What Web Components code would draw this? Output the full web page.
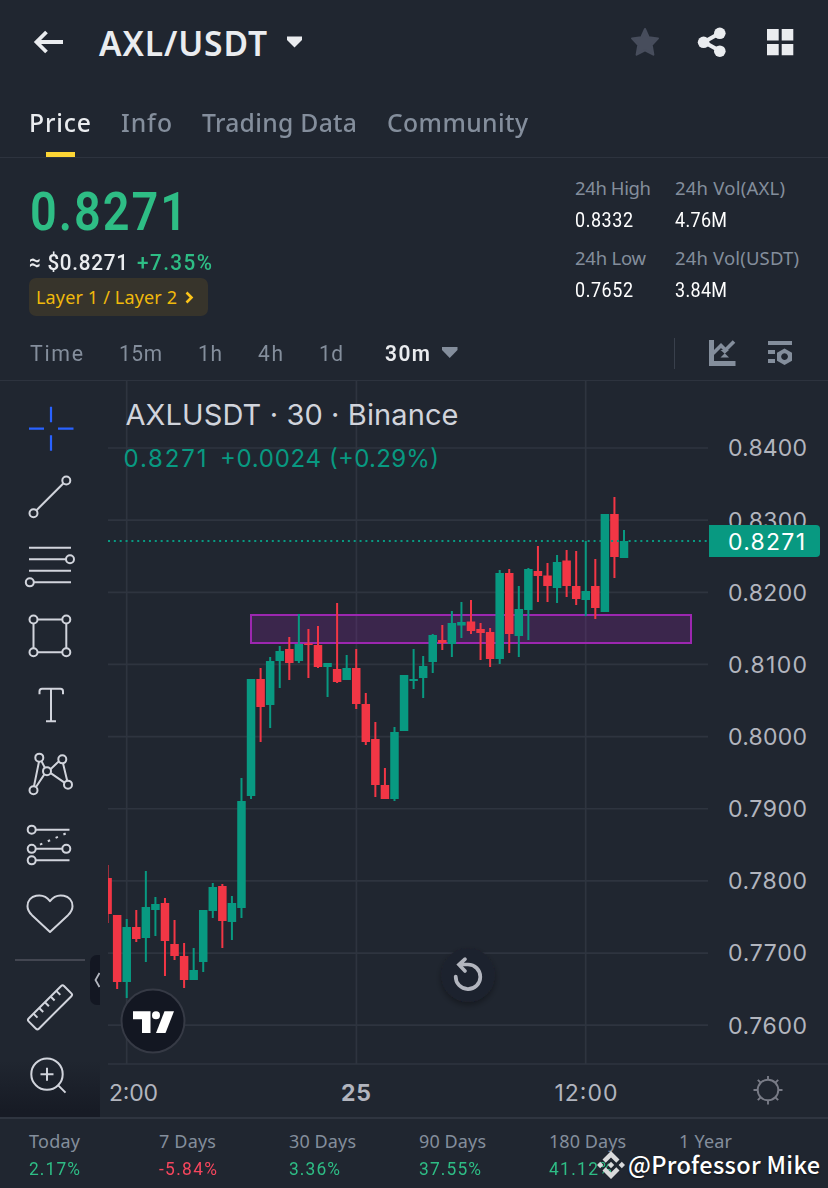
<!DOCTYPE html>
<html lang="en">
<head>
<meta charset="utf-8">
<title>AXL/USDT</title>
<style>
  body {
    margin: 0;
    background: #202630;
    --bg: #202630;
    --line: #2d333e;
    --muted: #848e9c;
    --light: #eaecef;
    --up: #2ebd85;
    --down: #f6465d;
    --sans: "Noto Sans", "Open Sans", sans-serif;
    --num: Roboto, "Liberation Sans", sans-serif;
    font-family: var(--sans);
    color: var(--light);
  }
</style>
</head>
<body>
<trade-page></trade-page>

<script>
  // Text that is tracked to fill a given width, with glyphs narrowed by "squeeze"
  class FitText extends HTMLElement {
    constructor() {
      super();
      this.attachShadow({ mode: 'open' });
      this.shadowRoot.innerHTML = `
        <style>
          :host { display: inline-block; white-space: nowrap; flex: none; }
          span { display: inline-block; transform-origin: 0 50%; }
        </style>
        <span><slot></slot></span>
      `;
    }

    connectedCallback() {
      const width = Number(this.getAttribute('width'));
      const squeeze = Number(this.getAttribute('squeeze') || 1);
      const span = this.shadowRoot.querySelector('span');
      const natural = span.getBoundingClientRect().width;
      const gaps = this.textContent.length - 1;
      span.style.letterSpacing = `${(width / squeeze - natural) / gaps}px`;
      if (squeeze !== 1) span.style.transform = `scaleX(${squeeze})`;
      this.style.width = `${width}px`;
    }
  }

  class AppHeader extends HTMLElement {
    constructor() {
      super();
      this.attachShadow({ mode: 'open' });
      this.shadowRoot.innerHTML = `
        <style>
          :host { display: flex; align-items: center; height: 84px; padding: 0 33px; box-sizing: border-box; }
          svg { display: block; flex: none; }
          .title { font-size: 33.6px; font-weight: 600; line-height: 82px; padding-top: 2px; margin-left: 36px; }
          .caret { margin-left: 20px; }
          .actions { display: flex; margin-left: auto; }
          .share { margin: 0 40px 0 37px; }
        </style>
        <svg width="30" height="24" viewBox="0 0 30 24" fill="none" stroke="#eaecef" stroke-width="3.8">
          <path d="M30 12H4M13.5 2L3.5 12L13.5 22"/>
        </svg>
        <fit-text class="title" width="168">AXL/USDT</fit-text>
        <svg class="caret" width="16" height="12" viewBox="0 0 16 12" fill="#eaecef">
          <path d="M0 0.5H15V4L7.5 11.5L0 4Z"/>
        </svg>
        <div class="actions">
          <svg width="30" height="30" viewBox="0 0 30 30" fill="#474d5c" stroke="#474d5c" stroke-width="2" stroke-linejoin="round">
            <path d="M15 2L18.8 10.3L28 11.4L21.7 18L23.4 27.7L15 23.4L6.6 27.7L8.3 18L2 11.4L11.2 10.3Z"/>
          </svg>
          <svg class="share" width="30" height="30" viewBox="0 0 30 30" fill="#eaecef">
            <path d="M23 6L7 15L23 24" fill="none" stroke="#eaecef" stroke-width="4"/>
            <circle cx="6.6" cy="15.3" r="5.8"/><circle cx="22.8" cy="6.3" r="5.8"/><circle cx="22.8" cy="24.2" r="5.8"/>
          </svg>
          <svg width="28" height="30" viewBox="0 0 28 30" fill="#eaecef">
            <path d="M0 2H11.7V13.5H0ZM14.7 2H26.3V13.5H14.7ZM0 17H11.7V28.2H0ZM14.7 17H26.3V28.2H14.7Z"/>
          </svg>
        </div>
      `;
    }
  }

  class TabBar extends HTMLElement {
    constructor() {
      super();
      this.attachShadow({ mode: 'open' });
      this.shadowRoot.innerHTML = `
        <style>
          :host {
            display: flex; gap: 30px; height: 74px; padding: 0 29px; box-sizing: border-box;
            border-bottom: 1px solid var(--line);
            font-size: 25.5px; font-weight: 500; line-height: 76px; color: var(--muted);
          }
          .active { position: relative; color: var(--light); }
          .active::after {
            content: ''; position: absolute; left: 16.5px; bottom: 0;
            width: 29px; height: 5px; background: #fcd535;
          }
        </style>
        <fit-text class="active" width="62" squeeze="0.97">Price</fit-text>
        <fit-text width="51" squeeze="0.97">Info</fit-text>
        <fit-text width="155" squeeze="0.97">Trading Data</fit-text>
        <fit-text width="141" squeeze="0.97">Community</fit-text>
      `;
    }
  }

  class StatCell extends HTMLElement {
    constructor() {
      super();
      this.attachShadow({ mode: 'open' });
      this.shadowRoot.innerHTML = `
        <style>
          :host { display: flex; flex-direction: column; }
          .label { font-size: 18.5px; line-height: 30px; color: var(--muted); }
          .value { font: 19.5px/33px var(--num); padding-top: 1px; margin-bottom: -1px; color: #fff; }
        </style>
        <div class="label"><slot name="label"></slot></div>
        <div class="value"><slot></slot></div>
      `;
    }
  }

  class TickerSummary extends HTMLElement {
    constructor() {
      super();
      this.attachShadow({ mode: 'open' });
      this.shadowRoot.innerHTML = `
        <style>
          :host { display: flex; justify-content: space-between; height: 170px; padding: 0 28px 0 29px; box-sizing: border-box; }
          .main { display: flex; flex-direction: column; align-items: flex-start; padding-top: 23px; }
          .price { font: 600 54.5px/60px var(--num); color: var(--up); margin-left: 1px; }
          .sub { display: flex; gap: 9px; margin-top: 6px; font: 500 22.5px/30px var(--num); }
          .sub .up { color: var(--up); }
          .chip {
            display: flex; align-items: center; height: 38px; width: 179px; margin-top: 1px;
            padding: 0 8px 0 7px; box-sizing: border-box; gap: 8px;
            border-radius: 7px; background: #37342b; color: #f0b90b; font-size: 18px;
          }
          .stats { display: grid; grid-template-columns: 100px 125px; row-gap: 6.5px; align-content: start; padding-top: 15px; }
        </style>
        <div class="main">
          <fit-text class="price" width="157" squeeze="0.86">0.8271</fit-text>
          <div class="sub">
            <fit-text width="99" squeeze="0.92">≈ $0.8271</fit-text>
            <fit-text class="up" width="75" squeeze="0.92">+7.35%</fit-text>
          </div>
          <div class="chip">
            <fit-text width="141">Layer 1 / Layer 2</fit-text>
            <svg width="9" height="13" viewBox="0 0 9 13" fill="none" stroke="#fcc419" stroke-width="2.6">
              <path d="M1.5 1.5L6.5 6.5L1.5 11.5"/>
            </svg>
          </div>
        </div>
        <div class="stats">
          <stat-cell><fit-text slot="label" width="76">24h High</fit-text><fit-text width="58" squeeze="0.92">0.8332</fit-text></stat-cell>
          <stat-cell><fit-text slot="label" width="110">24h Vol(AXL)</fit-text><fit-text width="52" squeeze="0.92">4.76M</fit-text></stat-cell>
          <stat-cell><fit-text slot="label" width="71">24h Low</fit-text><fit-text width="58" squeeze="0.92">0.7652</fit-text></stat-cell>
          <stat-cell><fit-text slot="label" width="124">24h Vol(USDT)</fit-text><fit-text width="52" squeeze="0.92">3.84M</fit-text></stat-cell>
        </div>
      `;
    }
  }

  class IntervalBar extends HTMLElement {
    constructor() {
      super();
      this.attachShadow({ mode: 'open' });
      this.shadowRoot.innerHTML = `
        <style>
          :host {
            display: flex; align-items: center; height: 53px; padding: 0 34px 2px 30px; box-sizing: border-box;
            border-bottom: 1px solid var(--line);
            font: 22.5px/50px var(--num); color: var(--muted);
          }
          .times { display: flex; gap: 36px; }
          .current { font-weight: 600; color: var(--light); margin-left: 42px; }
          .caret { margin-left: 12px; }
          .divider { width: 1px; height: 31px; background: #39404c; margin-left: auto; }
          .tools { display: flex; gap: 31px; margin-left: 34px; }
          svg { display: block; flex: none; }
        </style>
        <div class="times">
          <fit-text width="53" squeeze="0.95">Time</fit-text>
          <fit-text width="43" squeeze="0.93">15m</fit-text>
          <fit-text width="24" squeeze="0.93">1h</fit-text>
          <fit-text width="25" squeeze="0.93">4h</fit-text>
          <fit-text width="24" squeeze="0.93">1d</fit-text>
        </div>
        <fit-text class="current" width="45" squeeze="0.93">30m</fit-text>
        <svg class="caret" width="16" height="12" viewBox="0 0 16 12" fill="#848e9c"><path d="M0 0H15.5V3L7.7 11L0 3Z"/></svg>
        <div class="divider"></div>
        <div class="tools">
          <svg width="28" height="28" viewBox="0 0 28 28" fill="#848e9c">
            <path d="M0 1H5V22H26.5V27H0Z"/>
            <path d="M4 14.5L12 6.5L16.5 11L25 2.5" fill="none" stroke="#848e9c" stroke-width="3.6"/>
            <path d="M11.5 11H20L16 14.5L20 18.5H11.5L15.5 14.5Z"/>
          </svg>
          <svg width="26" height="28" viewBox="0 0 26 28" fill="#848e9c">
            <path d="M0 2H24V6H0ZM0 11H7V15H0ZM0 20H7V24H0Z"/>
            <path fill-rule="evenodd" d="M16.5 9.5L24 13.8V21.7L16.5 26L9 21.7V13.8ZM16.5 14.2A3.4 3.4 0 1 0 16.6 14.2Z"/>
          </svg>
        </div>
      `;
    }
  }

  // Drawing tools, each one centred on 0,0
  const TOOLS = [
    '<path stroke="#2962ff" stroke-width="2.2" d="M1-22V-6.5M1 6.5V22M-21 0H-6M8 0H23.5"/>',
    '<path d="M-13.5 12.6L13.2-14.2"/><circle cx="-16.5" cy="15.6" r="4"/><circle cx="16.3" cy="-17.2" r="4"/>',
    '<path d="M-21-19H21M-21-7.4H16M-21 4.2H21M-16 15.7H21"/><circle cx="20" cy="-7.4" r="4"/><circle cx="-20.2" cy="15.7" r="4"/>',
    '<path d="M-12.5-17.2H12.3M-12.5 15.6H12.3M-16.5-13.2V11.6M16.3-13.2V11.6"/><circle cx="-16.5" cy="-17.2" r="4"/><circle cx="16.3" cy="-17.2" r="4"/><circle cx="-16.5" cy="15.6" r="4"/><circle cx="16.3" cy="15.6" r="4"/>',
    '<path d="M-10.5-11.5V-14.5Q-10.5-17-8-17H10.5Q13-17 13-14.5V-11.5M1-17V15.7M-4 15.7H6"/>',
    '<path d="M-11-13L-16 11.5M-8.5-13.5L-5.2-7M-5.5-.5L-14 12.3M.5-5.5L9-13.5M13-11.5L17.2 6M.7-1.5L14.5 8"/><circle cx="-10.7" cy="-17" r="4"/><circle cx="12.3" cy="-15.3" r="4"/><circle cx="-3" cy="-3.5" r="4"/><circle cx="-16.5" cy="15.6" r="4"/><circle cx="18" cy="10" r="4"/>',
    '<path d="M-14-15H19.5M-14 4.2H12.3M-14 15.7H19.5"/><path stroke-dasharray="2.5 6" d="M-10 0L16.5-11.5"/><circle cx="-18.3" cy="-15" r="4"/><circle cx="-18.3" cy="4.2" r="4"/><circle cx="16.3" cy="4.2" r="4"/><circle cx="-18.3" cy="15.7" r="4"/>',
    '<path stroke-linejoin="round" d="M0-12.5C-7-22-22.5-19-22.5-7.5C-22.5-3-20-.5-18 1.5L0 18.3L18 1.5C20-.5 22.5-3 22.5-7.5C22.5-19 7-22 0-12.5Z"/>',
    '<hr>',
    '<rect x="-25" y="-7.2" width="50" height="14.4" rx="2" transform="translate(0 .7) rotate(-45)"/><path d="M-16.5 7L-12.5 11M-10.8 1.3L-6.8 5.3M-5.1-4.4L-1.1-.4M.6-10.1L4.6-6.1M6.3-15.8L10.3-11.8"/>',
    '<circle cx="-3" cy="-1.5" r="15.7"/><path d="M-9.5-1.5H3.5M-3-8V5M8 9.5L15.5 17"/>'
  ];

  class DrawToolbar extends HTMLElement {
    constructor() {
      super();
      this.attachShadow({ mode: 'open' });
      this.shadowRoot.innerHTML = `
        <style>
          :host {
            display: flex; flex-direction: column; position: relative; height: 736px; width: 100px;
            padding-top: 12.8px; box-sizing: border-box;
            background: linear-gradient(#171b2500 680px, #171b25 730px);
          }
          svg { display: block; flex: none; }
          .sep { height: 24px; flex: none; display: flex; align-items: center; }
          .sep::before { content: ''; width: 70px; height: 2px; margin-left: 15px; background: #434651; }
          .fold {
            position: absolute; right: 0; top: 574px; width: 10px; height: 50px;
            background: #131722; border-radius: 7px 0 0 7px;
          }
        </style>
        ${TOOLS.map(tool => this.renderTool(tool)).join('')}
        <div class="fold">
          <svg width="10" height="50" viewBox="0 0 10 50" fill="none" stroke="#b2b5be" stroke-width="1.8"><path d="M9.5 18L5.5 25L9.5 32"/></svg>
        </div>
      `;
    }

    renderTool(tool) {
      if (tool === '<hr>') return '<div class="sep"></div>';
      return `<svg width="100" height="69.3" viewBox="-50 -34.65 100 69.3" fill="none" stroke="#d1d4dc" stroke-width="2">${tool}</svg>`;
    }
  }

  const GREEN = '#089981';
  const RED = '#f23645';

  // [up, wick top, wick bottom, body top, body bottom]
  const CANDLES = [
    [0, 865, 923, 878, 914], [0, 915, 989, 915, 982], [1, 919, 998, 927, 982], [0, 910, 942, 927, 939],
    [1, 871, 962, 907, 938], [1, 897, 936, 904, 910], [0, 898, 976, 903, 941], [0, 920, 960, 944, 956],
    [0, 943, 988, 956, 980], [1, 948, 980, 970, 980], [1, 910, 972, 910, 962], [1, 883, 918, 887, 911],
    [0, 884, 948, 886, 921], [1, 896, 940, 903, 922], [1, 778, 918, 801, 908], [1, 679, 799, 679, 796],
    [0, 668, 742, 679, 707], [1, 657, 728, 661, 705], [1, 646, 688, 651, 661], [0, 637, 680, 649, 663],
    [1, 614, 663, 644, 661], [0, 629, 678, 643.5, 645], [0, 626, 668, 645, 667], [1, 663, 697, 663, 667],
    [0, 603, 683, 669, 682], [1, 655, 680, 668, 680], [0, 649, 709, 668, 704], [0, 693, 745, 704, 742],
    [0, 722, 797, 739, 785], [0, 768, 799, 785, 799], [1, 727, 801, 732, 799], [1, 675, 731, 675, 731],
    [1, 649, 689, 679, 681], [1, 656, 698, 666, 678], [1, 634, 673, 635, 662], [0, 625, 650, 640, 643],
    [1, 611, 657, 623, 644], [1, 602, 638, 622, 625.5], [0, 600, 634, 621.5, 631], [0, 623, 660, 629, 633],
    [0, 628, 667, 632, 659], [1, 570, 664, 573, 659], [0, 569, 653, 573, 634], [1, 586, 657, 609, 636],
    [1, 568, 640, 569, 610], [0, 546, 602, 571, 576], [0, 563, 602, 575.5, 586], [1, 555, 603, 562, 588],
    [0, 550, 597, 560.5, 586], [0, 551, 605, 586, 599], [1, 541, 616, 591, 600], [0, 559, 619, 586, 608],
    [1, 514, 612, 514, 612], [0, 497, 578, 514, 557], [1, 530, 558, 541, 558]
  ];

  class PriceChart extends HTMLElement {
    constructor() {
      super();
      this.attachShadow({ mode: 'open' });
      this.shadowRoot.innerHTML = `
        <style>
          :host { display: block; font-family: Inter, "Liberation Sans", sans-serif; }
          svg { display: block; }
          .axis { font-size: 23px; fill: #b2b5be; }
        </style>
        <svg width="728" height="736" viewBox="100 381 728 736">
          <defs>
            <clipPath id="plot"><rect x="108" y="381" width="600" height="683"/></clipPath>
            <filter id="shadow" x="-50%" y="-50%" width="200%" height="200%">
              <feDropShadow dx="0" dy="3" stdDeviation="3" flood-color="#000" flood-opacity=".35"/>
            </filter>
          </defs>
          ${this.renderGrid()}
          <rect x="251" y="615" width="440" height="28" fill="#9c27b0" fill-opacity=".22" stroke="#9c27b0" stroke-width="2"/>
          <g clip-path="url(#plot)">${this.renderCandles()}</g>
          <path d="M108 541H708" stroke="${GREEN}" stroke-width="2" stroke-dasharray="2 3.85"/>
          <text x="125.5" y="425" font-size="29" fill="#d1d4dc" textLength="333">AXLUSDT · 30 · Binance</text>
          <g font-size="24" fill="${GREEN}">
            <text x="123.5" y="466.5" textLength="83">0.8271</text>
            <text x="220" y="466.5" textLength="101">+0.0024</text>
            <text x="329" y="466.5" textLength="110">(+0.29%)</text>
          </g>
          ${this.renderPrices()}
          <path d="M709 525H816Q820 525 820 529V553Q820 557 816 557H709Z" fill="${GREEN}"/>
          <text class="axis" x="728" y="549.5" textLength="77" style="fill:#fff">0.8271</text>
          <g class="axis">
            <text x="109" y="1100.5" textLength="49">2:00</text>
            <text x="341" y="1100.5" textLength="30" font-weight="700">25</text>
            <text x="554.5" y="1100.5" textLength="63">12:00</text>
          </g>
          <g fill="none" stroke="#787b86" stroke-width="1.9">
            <circle cx="768" cy="1090" r="10.3"/>
            <path d="M768 1079.5V1076M768 1100.5V1104.5M757.5 1090H753.5M778.5 1090H782.5M760.6 1082.6L757.8 1079.8M775.4 1082.6L778.2 1079.8M760.6 1097.4L757.8 1100.2M775.4 1097.4L778.2 1100.2"/>
          </g>
          <circle cx="153" cy="1021" r="31.5" fill="#131722" stroke="#363a45" stroke-width="2"/>
          <g fill="#fff">
            <path d="M133 1011.3H150.5V1033H142V1019.3H133Z"/>
            <circle cx="156" cy="1015.3" r="4"/>
            <path d="M164.5 1011.3H174L165.5 1033H156Z"/>
          </g>
          <circle cx="468" cy="975" r="27" fill="#1e222d" filter="url(#shadow)"/>
          <path d="M455.7 976.5A12.3 12.3 0 1 0 468 964.5H460M465 959.2L459 964.7L465 971" fill="none" stroke="#b2b5be" stroke-width="3.7" stroke-linecap="round"/>
        </svg>
      `;
    }

    renderGrid() {
      let d = '';
      for (let i = 0; i < 9; i++) {
        d += `M108 ${448 + i * 72.15}H708`;
      }
      d += 'M126.7 381V1064M356.4 381V1064M585.7 381V1064M108 1064H828';
      return `<path d="${d}" fill="none" stroke="#2e343f" stroke-width="1.7"/>`;
    }

    renderCandles() {
      return CANDLES.map(([up, high, low, top, bottom], i) => {
        const x = 107.6 + i * 9.563;
        const color = up ? GREEN : RED;
        return `<path fill="${color}" d="M${x - 1} ${high}h2V${low}h-2ZM${x - 4.25} ${top}h8.5V${bottom}h-8.5Z"/>`;
      }).join('');
    }

    renderPrices() {
      let html = '';
      for (let i = 0; i < 9; i++) {
        const price = (0.84 - i * 0.01).toFixed(4);
        html += `<text class="axis" x="728" y="${456.4 + i * 72.15}" textLength="79">${price}</text>`;
      }
      return html;
    }
  }

  class PeriodStats extends HTMLElement {
    constructor() {
      super();
      this.attachShadow({ mode: 'open' });
      // name, name width, change, change width
      const periods = [
        ['Today', 51, '2.17%', 51],
        ['7 Days', 57, '-5.84%', 58],
        ['30 Days', 67, '3.36%', 51],
        ['90 Days', 67, '37.55%', 62],
        ['180 Days', 77, '41.12%', 63],
        ['1 Year', 53, '--', 13]
      ];
      this.shadowRoot.innerHTML = `
        <style>
          :host {
            display: grid; grid-template-columns: repeat(6, 130px); height: 71px; padding: 9px 0 0 29px;
            box-sizing: border-box; border-top: 2px solid #2f3540;
          }
          .period { display: flex; flex-direction: column; }
          .name { font-size: 18px; line-height: 26px; color: var(--muted); }
          .change { font: 18.7px/27px var(--num); padding-top: 2px; color: var(--up); }
          .change.down { color: var(--down); }
          .change.none { color: var(--muted); }
        </style>
        ${periods.map(([name, w, change, cw]) => `
          <div class="period">
            <fit-text class="name" width="${w}">${name}</fit-text>
            <fit-text class="change ${change === '--' ? 'none' : change[0] === '-' ? 'down' : ''}" width="${cw}" squeeze="0.93">${change}</fit-text>
          </div>`).join('')}
      `;
    }
  }

  class AuthorMark extends HTMLElement {
    constructor() {
      super();
      this.attachShadow({ mode: 'open' });
      this.shadowRoot.innerHTML = `
        <style>
          :host {
            display: flex; align-items: center; gap: 3px; position: absolute; right: 8px; bottom: 8px;
            font: 500 23.5px/32px "Noto Sans CJK SC", sans-serif; color: #fff;
            text-shadow: 0 1px 2px #0008;
          }
          fit-text { margin-top: -2px; }
        </style>
        <svg width="28" height="28" viewBox="-14 -14 28 28" fill="#d9dadb">
          <path d="M0-14L8.5-5.5L5.3-2.3L0-7.6L-5.3-2.3L-8.5-5.5ZM0 14L8.5 5.5L5.3 2.3L0 7.6L-5.3 2.3L-8.5 5.5ZM0-3.2L3.2 0L0 3.2L-3.2 0ZM-10.8-3.2L-7.6 0L-10.8 3.2L-14 0ZM10.8-3.2L14 0L10.8 3.2L7.6 0Z"/>
        </svg>
        <fit-text width="192">@Professor Mike</fit-text>
      `;
    }
  }

  class TradePage extends HTMLElement {
    constructor() {
      super();
      this.attachShadow({ mode: 'open' });
      this.shadowRoot.innerHTML = `
        <style>
          :host { display: block; position: relative; width: 828px; height: 1188px; overflow: hidden; background: var(--bg); }
          .chart { display: flex; }
        </style>
        <app-header></app-header>
        <tab-bar></tab-bar>
        <ticker-summary></ticker-summary>
        <interval-bar></interval-bar>
        <div class="chart">
          <draw-toolbar></draw-toolbar>
          <price-chart></price-chart>
        </div>
        <period-stats></period-stats>
        <author-mark></author-mark>
      `;
    }
  }

  customElements.define('fit-text', FitText);
  customElements.define('app-header', AppHeader);
  customElements.define('tab-bar', TabBar);
  customElements.define('stat-cell', StatCell);
  customElements.define('ticker-summary', TickerSummary);
  customElements.define('interval-bar', IntervalBar);
  customElements.define('draw-toolbar', DrawToolbar);
  customElements.define('price-chart', PriceChart);
  customElements.define('period-stats', PeriodStats);
  customElements.define('author-mark', AuthorMark);
  customElements.define('trade-page', TradePage);
</script>
</body>
</html>
